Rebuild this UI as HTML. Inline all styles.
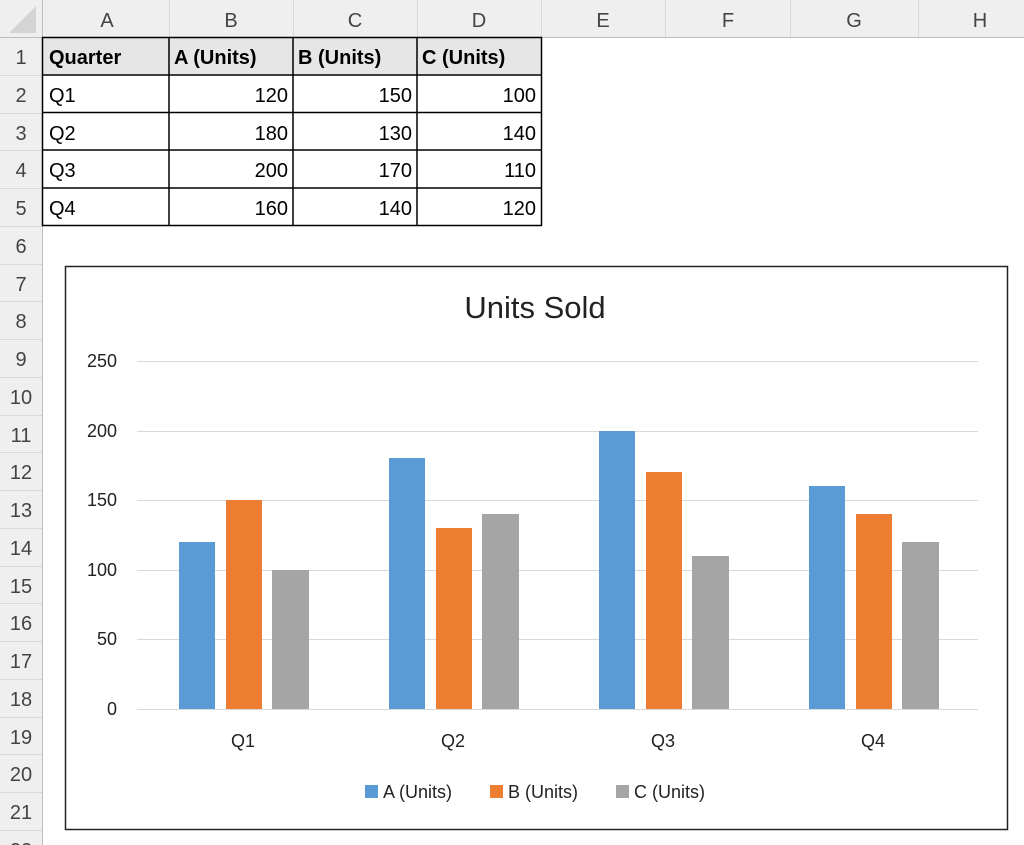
<!DOCTYPE html>
<html><head><meta charset="utf-8"><style>
body{margin:0;width:1024px;height:845px;overflow:hidden;background:#fff;font-family:"Liberation Sans",sans-serif;position:relative}
.a{position:absolute}
</style></head><body>
<svg class="a" style="left:0;top:0" width="1024" height="845" font-family="Liberation Sans, sans-serif">
<rect x="0" y="0" width="1024" height="37" fill="#efefef"/>
<rect x="0" y="0" width="42" height="845" fill="#efefef"/>
<polygon points="36,6 36,33 9,33" fill="#d4d4d4"/>
<g stroke="#d9d9d9" stroke-width="1">
<line x1="169.5" y1="0" x2="169.5" y2="37"/><line x1="293.5" y1="0" x2="293.5" y2="37"/><line x1="417.5" y1="0" x2="417.5" y2="37"/><line x1="541.5" y1="0" x2="541.5" y2="37"/><line x1="665.5" y1="0" x2="665.5" y2="37"/><line x1="790.5" y1="0" x2="790.5" y2="37"/><line x1="918.5" y1="0" x2="918.5" y2="37"/>
</g>
<g stroke="#d9d9d9" id="rows"></g>
<line x1="42.5" y1="0" x2="42.5" y2="845" stroke="#bdbdbd"/>
<line x1="0" y1="37.5" x2="1024" y2="37.5" stroke="#bdbdbd"/>
<g font-size="20" fill="#444" text-anchor="middle">
<text x="107" y="27">A</text><text x="231" y="27">B</text><text x="355" y="27">C</text><text x="479" y="27">D</text><text x="603" y="27">E</text><text x="728" y="27">F</text><text x="854" y="27">G</text><text x="980" y="27">H</text>
</g>
<g font-size="20" fill="#444" text-anchor="middle" id="rn"></g>
<rect x="42" y="37" width="499" height="37" fill="#e7e6e6"/>
<g stroke="#000" stroke-width="1.5" fill="none">
<rect x="42.5" y="37.5" width="499" height="188"/>
<line x1="42" y1="75" x2="541" y2="75"/><line x1="42" y1="112.5" x2="541" y2="112.5"/><line x1="42" y1="150" x2="541" y2="150"/><line x1="42" y1="188" x2="541" y2="188"/>
<line x1="169" y1="37" x2="169" y2="225"/><line x1="293" y1="37" x2="293" y2="225"/><line x1="417" y1="37" x2="417" y2="225"/>
</g>
<g font-size="20" fill="#000" font-weight="bold">
<text x="49" y="64">Quarter</text><text x="174" y="64">A (Units)</text><text x="298" y="64">B (Units)</text><text x="422" y="64">C (Units)</text>
</g>
<g font-size="20" fill="#000">
<text x="49" y="102">Q1</text><text x="49" y="140">Q2</text><text x="49" y="177">Q3</text><text x="49" y="215">Q4</text>
</g>
<g font-size="20" fill="#000" text-anchor="end">
<text x="288" y="102">120</text><text x="412" y="102">150</text><text x="536" y="102">100</text>
<text x="288" y="140">180</text><text x="412" y="140">130</text><text x="536" y="140">140</text>
<text x="288" y="177">200</text><text x="412" y="177">170</text><text x="536" y="177">110</text>
<text x="288" y="215">160</text><text x="412" y="215">140</text><text x="536" y="215">120</text>
</g>
<rect x="65.5" y="266.5" width="942" height="563" fill="#fff" stroke="#222" stroke-width="1.5"/>
<text x="535" y="318" font-size="31" text-anchor="middle" fill="#222">Units Sold</text>
<g stroke="#d9d9d9" stroke-width="1">
<line x1="137" y1="361.5" x2="978" y2="361.5"/><line x1="137" y1="431.5" x2="978" y2="431.5"/><line x1="137" y1="500.5" x2="978" y2="500.5"/><line x1="137" y1="570.5" x2="978" y2="570.5"/><line x1="137" y1="639.5" x2="978" y2="639.5"/><line x1="137" y1="709.5" x2="978" y2="709.5"/>
</g>
<g font-size="18" fill="#222" text-anchor="end">
<text x="117" y="367">250</text><text x="117" y="437">200</text><text x="117" y="506">150</text><text x="117" y="576">100</text><text x="117" y="645">50</text><text x="117" y="715">0</text>
</g>
<g>
<rect x="179" y="542" width="36" height="167" fill="#5b9bd5"/><rect x="226" y="500" width="36" height="209" fill="#ed7d31"/><rect x="272" y="570" width="37" height="139" fill="#a5a5a5"/>
<rect x="389" y="458" width="36" height="251" fill="#5b9bd5"/><rect x="436" y="528" width="36" height="181" fill="#ed7d31"/><rect x="482" y="514" width="37" height="195" fill="#a5a5a5"/>
<rect x="599" y="431" width="36" height="278" fill="#5b9bd5"/><rect x="646" y="472" width="36" height="237" fill="#ed7d31"/><rect x="692" y="556" width="37" height="153" fill="#a5a5a5"/>
<rect x="809" y="486" width="36" height="223" fill="#5b9bd5"/><rect x="856" y="514" width="36" height="195" fill="#ed7d31"/><rect x="902" y="542" width="37" height="167" fill="#a5a5a5"/>
</g>
<g font-size="18" fill="#222" text-anchor="middle">
<text x="243" y="747">Q1</text><text x="453" y="747">Q2</text><text x="663" y="747">Q3</text><text x="873" y="747">Q4</text>
</g>
<rect x="365" y="785" width="13" height="13" fill="#5b9bd5"/><rect x="490" y="785" width="13" height="13" fill="#ed7d31"/><rect x="616" y="785" width="13" height="13" fill="#a5a5a5"/>
<g font-size="18" fill="#222">
<text x="383" y="798">A (Units)</text><text x="508" y="798">B (Units)</text><text x="634" y="798">C (Units)</text>
</g>
</svg>
<script>
var ns="http://www.w3.org/2000/svg",g=document.getElementById("rows"),rn=document.getElementById("rn");
for(var i=1;i<=22;i++){var y=37+(i)*37.76;var l=document.createElementNS(ns,"line");l.setAttribute("x1",0);l.setAttribute("x2",42);l.setAttribute("y1",Math.round(y)+.5);l.setAttribute("y2",Math.round(y)+.5);g.appendChild(l);
var t=document.createElementNS(ns,"text");t.setAttribute("x",21);t.setAttribute("y",Math.round(37+(i-1)*37.76+27));t.textContent=i;rn.appendChild(t);}
</script>
</body></html>
